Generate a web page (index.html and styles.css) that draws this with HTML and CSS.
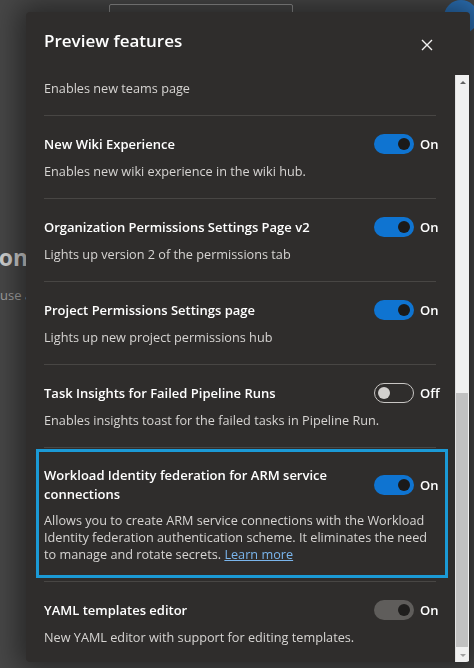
FILE: index.html
```html
<!DOCTYPE html>
<html lang="en">
<head>
    <meta charset="UTF-8">
    <meta name="viewport" content="width=device-width, initial-scale=1.0">
    <title>Preview features</title>
    <link rel="stylesheet" href="styles.css">
</head>
<body>
    <!-- Page behind the dialog -->
    <div class="page">
        <header class="topbar">
            <div class="search"></div>
            <div class="avatar"></div>
        </header>
        <main class="main">
            <h2 class="page-title">Conni</h2>
            <p class="page-text">use a</p>
        </main>
    </div>

    <div class="overlay">
        <div class="dialog">
            <div class="dialog-header">
                <h1>Preview features</h1>
                <button class="close-btn" aria-label="Close">
                    <svg width="12" height="12" viewBox="0 0 12 12">
                        <path d="M1 1 L11 11 M11 1 L1 11" stroke="#f3f2f1" stroke-width="1.4" fill="none"/>
                    </svg>
                </button>
            </div>

            <div class="dialog-body">
                <div class="feature-list">
                    <div class="feature partial">
                        <div class="feature-desc">Enables new teams page</div>
                    </div>
                    <div class="sep"></div>

                    <div class="feature">
                        <div class="feature-row">
                            <div class="feature-name">New Wiki Experience</div>
                            <div class="switch"><span class="toggle on"></span><span class="toggle-label">On</span></div>
                        </div>
                        <div class="feature-desc">Enables new wiki experience in the wiki hub.</div>
                    </div>
                    <div class="sep"></div>

                    <div class="feature">
                        <div class="feature-row">
                            <div class="feature-name">Organization Permissions Settings Page v2</div>
                            <div class="switch"><span class="toggle on"></span><span class="toggle-label">On</span></div>
                        </div>
                        <div class="feature-desc">Lights up version 2 of the permissions tab</div>
                    </div>
                    <div class="sep"></div>

                    <div class="feature">
                        <div class="feature-row">
                            <div class="feature-name">Project Permissions Settings page</div>
                            <div class="switch"><span class="toggle on"></span><span class="toggle-label">On</span></div>
                        </div>
                        <div class="feature-desc">Lights up new project permissions hub</div>
                    </div>
                    <div class="sep"></div>

                    <div class="feature">
                        <div class="feature-row">
                            <div class="feature-name">Task Insights for Failed Pipeline Runs</div>
                            <div class="switch"><span class="toggle off"></span><span class="toggle-label">Off</span></div>
                        </div>
                        <div class="feature-desc">Enables insights toast for the failed tasks in Pipeline Run.</div>
                    </div>
                    <div class="sep"></div>

                    <div class="feature highlight">
                        <div class="feature-row">
                            <div class="feature-name">Workload Identity federation for ARM service connections</div>
                            <div class="switch"><span class="toggle on"></span><span class="toggle-label">On</span></div>
                        </div>
                        <div class="feature-desc">Allows you to create ARM service connections with the Workload Identity federation authentication scheme. It eliminates the need to manage and rotate secrets. <a href="#" class="learn-more">Learn more</a></div>
                    </div>
                    <div class="sep"></div>

                    <div class="feature">
                        <div class="feature-row">
                            <div class="feature-name">YAML templates editor</div>
                            <div class="switch"><span class="toggle disabled"></span><span class="toggle-label">On</span></div>
                        </div>
                        <div class="feature-desc">New YAML editor with support for editing templates.</div>
                    </div>
                </div>

                <div class="scrollbar">
                    <div class="sb-btn"><span class="arrow-up"></span></div>
                    <div class="sb-track"><div class="sb-thumb"></div></div>
                    <div class="sb-btn"><span class="arrow-down"></span></div>
                </div>
            </div>
        </div>
    </div>
</body>
</html>
```

FILE: styles.css
```css
* {
    margin: 0;
    padding: 0;
    box-sizing: border-box;
}

body {
    font-family: "Open Sans", "Noto Sans", sans-serif;
    background: #474747;
    height: 100vh;
    overflow: hidden;
}

/* page under the overlay */
.topbar {
    height: 48px;
    display: flex;
    align-items: flex-start;
    justify-content: space-between;
    padding: 4px 0 0 109px;
}

.search {
    width: 184px;
    height: 30px;
    border: 1px solid #8e8e8e;
    border-radius: 2px;
}

.avatar {
    width: 34px;
    height: 34px;
    border-radius: 50%;
    background: #2c72b8;
    margin: -4px 0 0 0;
    transform: translateX(4px);
}

.main {
    padding-top: 194px;
    width: 27px;
    overflow: hidden;
}

.page-title {
    font-size: 23px;
    font-weight: 700;
    line-height: 30px;
    color: #cfcfcf;
    margin-left: -16px;
    white-space: nowrap;
}

.page-text {
    font-size: 13px;
    line-height: 20px;
    color: #a3a3a3;
    margin-top: 13px;
    white-space: nowrap;
}

/* dialog */
.overlay {
    position: fixed;
    inset: 0;
    padding: 12px 0 0 26px;
}

.dialog {
    width: 444px;
    height: 650px;
    background: #2f2d2c;
    border-radius: 4px;
    box-shadow: 0 0 28px 8px rgba(0, 0, 0, 0.45);
    display: flex;
    flex-direction: column;
    overflow: hidden;
}

.dialog-header {
    height: 63px;
    display: flex;
    justify-content: space-between;
    align-items: center;
    padding: 0 36px 5px 18px;
}

.dialog-header h1 {
    font-size: 17px;
    font-weight: 600;
    color: #ffffff;
    line-height: 22px;
}

.close-btn {
    background: none;
    border: none;
    width: 14px;
    height: 14px;
    display: flex;
    align-items: center;
    justify-content: center;
    margin-top: 7px;
}

.dialog-body {
    flex: 1;
    display: flex;
    min-height: 0;
}

.feature-list {
    flex: 1;
    padding: 0 19px 0 18px;
    overflow: hidden;
}

.feature {
    padding: 18px 0;
}

.feature.partial {
    padding-top: 4px;
}

.feature-row {
    display: flex;
    align-items: center;
    justify-content: space-between;
    min-height: 20px;
}

.feature-name {
    font-size: 13px;
    font-weight: 600;
    color: #ffffff;
    line-height: 19px;
    max-width: 305px;
}

.feature-desc {
    font-size: 12.7px;
    color: #d6d4d2;
    line-height: 18px;
    margin-top: 8px;
}

.partial .feature-desc {
    margin-top: 0;
}

.learn-more {
    color: #7ab5ec;
    text-decoration: underline;
}

.sep {
    height: 1px;
    background: #484644;
}

.highlight {
    border: 3px solid #1b9ad6;
    margin: 1px -12px 3px -8px;
    padding: 14px 9px 12px 5px;
}

.highlight .feature-desc {
    line-height: 17px;
}

/* toggle switches */
.switch {
    display: flex;
    align-items: center;
    width: 62px;
}

.toggle {
    width: 40px;
    height: 20px;
    border-radius: 10px;
    display: flex;
    align-items: center;
    padding: 0 4px;
    flex-shrink: 0;
}

.toggle::after {
    content: "";
    width: 12px;
    height: 12px;
    border-radius: 50%;
}

.toggle.on {
    background: #0f74d1;
    justify-content: flex-end;
}

.toggle.on::after {
    background: #1b1a19;
}

.toggle.off {
    border: 1px solid #c8c6c4;
    justify-content: flex-start;
    padding: 0 3px;
}

.toggle.off::after {
    background: #d2d0ce;
}

.toggle.disabled {
    background: #5f5d5b;
    justify-content: flex-end;
}

.toggle.disabled::after {
    background: #1f1e1d;
}

.toggle-label {
    font-size: 13px;
    font-weight: 600;
    color: #ffffff;
    margin-left: 6px;
}

/* fake scrollbar */
.scrollbar {
    width: 14px;
    margin-right: 1px;
    background: #f0f0f0;
    border-left: 1px solid #e2e2e2;
    display: flex;
    flex-direction: column;
}

.sb-btn {
    height: 14px;
    display: flex;
    align-items: center;
    justify-content: center;
}

.arrow-up {
    border-left: 3px solid transparent;
    border-right: 3px solid transparent;
    border-bottom: 3px solid #606060;
}

.arrow-down {
    border-left: 3px solid transparent;
    border-right: 3px solid transparent;
    border-top: 3px solid #a0a0a0;
}

.sb-track {
    flex: 1;
}

.sb-thumb {
    margin: 304px 1px 0 0;
    height: 254px;
    background: #c1c1c1;
}
```
